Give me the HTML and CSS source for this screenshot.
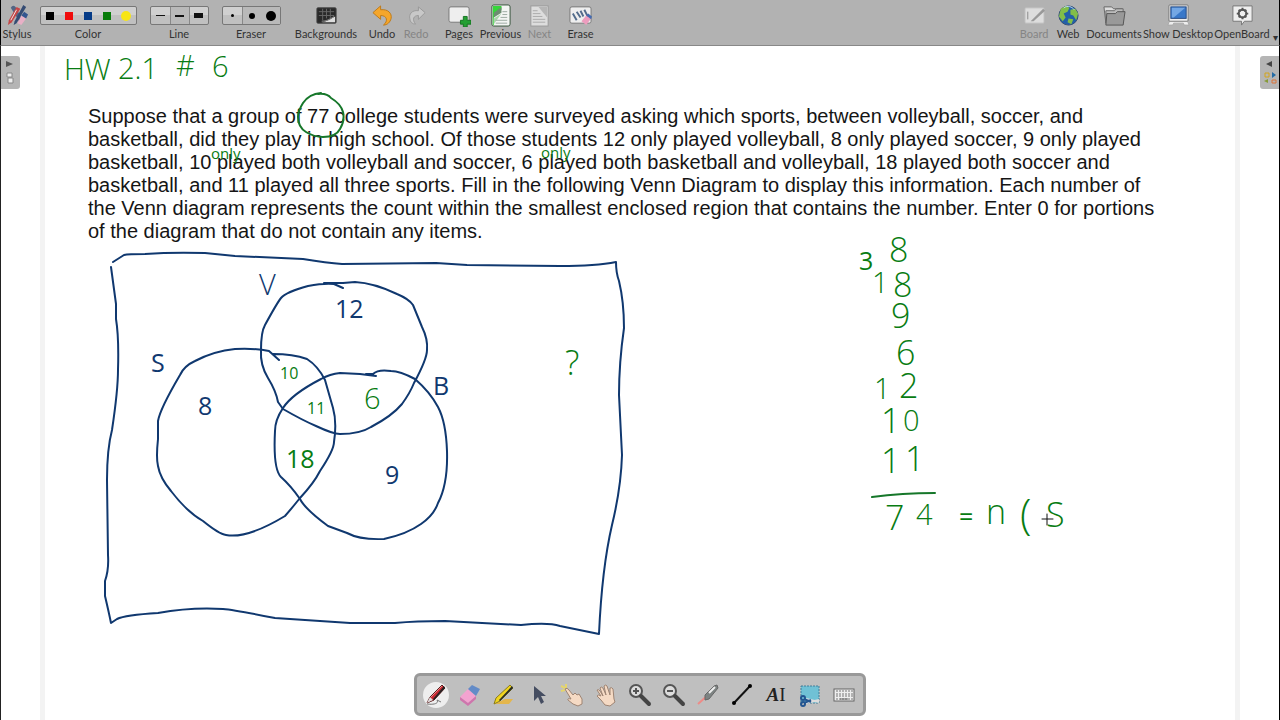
FILE: index.html
```html
<!DOCTYPE html>
<html lang="en">
<head>
<meta charset="utf-8">
<title>OpenBoard</title>
<link rel="stylesheet" href="styles.css">
</head>
<body>
<header class="toolbar">
  <div class="tools">
    <button class="tool w-stylus"><svg class="icon" viewBox="0 0 24 24"><path d="M5 4q2-4 5-1l8 15-3 2z" fill="#526584"/><path d="M11 3L3 17l-1 5 4-3L15 5z" fill="#c64545"/><path d="M11 6L5 17" stroke="#eee"/><path d="M18 1l3 2-10 17-3 2 1-4z" fill="#344b73"/><path d="M12 20l4-8 5 3-5 7z" fill="#e8b0c6"/><path d="M16 12l3-4 4 3-2 4z" fill="#34568f"/></svg><span>Stylus</span></button>
    <div class="tool w-color"><div class="choices" role="group" aria-labelledby="color-label"><button class="choice color-choice" aria-label="Black"><i class="swatch black"></i></button><button class="choice color-choice" aria-label="Red"><i class="swatch red"></i></button><button class="choice color-choice" aria-label="Blue"><i class="swatch blue"></i></button><button class="choice color-choice" aria-label="Green"><i class="swatch green"></i></button><button class="choice color-choice" aria-label="Yellow"><i class="swatch yellow"></i></button></div><span id="color-label">Color</span></div>
    <div class="tool w-line"><div class="choices split" role="group" aria-labelledby="line-label"><button class="choice" aria-label="Fine line"><i class="line fine"></i></button><button class="choice selected" aria-label="Medium line"><i class="line medium"></i></button><button class="choice" aria-label="Strong line"><i class="line strong"></i></button></div><span id="line-label">Line</span></div>
    <div class="tool w-eraser"><div class="choices split" role="group" aria-labelledby="eraser-label"><button class="choice" aria-label="Small eraser"><i class="dot small"></i></button><button class="choice selected" aria-label="Medium eraser"><i class="dot mid"></i></button><button class="choice selected no-rule" aria-label="Large eraser"><i class="dot large"></i></button></div><span id="eraser-label">Eraser</span></div>
    <button class="tool w-backgrounds"><svg class="icon" viewBox="0 0 24 24"><rect x="2" y="4" width="20" height="16" rx="1" fill="#292929" stroke="#444"/><path d="M4 8h16M4 12h16M8 5v12M12 5v10M16 5v10" stroke="#666"/><path d="M4 19c7 0 10-2 17-6v6z" fill="#ddd"/><path d="M7 18c5 0 8-2 13-5" stroke="#888" fill="none"/></svg><span>Backgrounds</span></button>
    <button class="tool w-undo"><svg class="icon" viewBox="0 0 24 24"><path d="M2 9l8-7v4c8-1 12 4 11 9-1 4-4 7-8 7 5-4 4-10-3-10v4z" fill="#f5a62b" stroke="#bd7918"/></svg><span>Undo</span></button>
    <button class="tool w-redo" disabled><svg class="icon" viewBox="0 0 24 24"><path d="M21 9l-7-6v4C7 6 4 11 5 15c0 4 3 6 6 6-4-5-2-9 3-9v4z" fill="#c8c8c8" stroke="#999"/></svg><span>Redo</span></button>
    <button class="tool w-pages group-start"><svg class="icon" viewBox="0 0 24 24"><rect x="1" y="3" width="21" height="16" rx="2" fill="#eee" stroke="#777"/><path d="M16 13h4v4h4v4h-4v3h-4v-3h-3v-4h3z" fill="#24a033" stroke="#167322"/></svg><span>Pages</span></button>
    <button class="tool w-step"><svg class="icon" viewBox="0 0 24 24"><rect x="3" y="1" width="19" height="22" rx="2" fill="#f3f5f3" stroke="#35533a"/><path d="M4 2h9v4L5 14v8H4z" fill="#37d63a"/><path d="M5 14V9l8-6v6z" fill="#6c8d70"/><path d="M5 21l8-11-8 5z" fill="#aad4aa"/><path d="M14 8h5M14 11h5M12 14h7M7 17h12M7 20h12" stroke="#9ba9a0"/></svg><span>Previous</span></button>
    <button class="tool w-step" disabled><svg class="icon" viewBox="0 0 24 24"><rect x="3" y="2" width="18" height="21" fill="#ddd" stroke="#999"/><path d="M11 3h9v11z" fill="#b6b6b6"/><path d="M5 7h5M5 10h8M5 13h10M5 16h13M5 19h13" stroke="#aaa"/></svg><span>Next</span></button>
    <button class="tool w-erase"><svg class="icon" viewBox="0 0 24 24"><rect x="1" y="3" width="22" height="17" rx="2" fill="#eee" stroke="#777"/><path d="M4 10l4 7M8 8l4 6M12 7l3 6M16 6l4 8" stroke="#526b8b" stroke-width="2"/><path d="M13 18l5-6 5 3-5 7z" fill="#ec9dbe"/><path d="M18 12l2-2 4 3-1 3z" fill="#456bae"/></svg><span>Erase</span></button>
  </div>
  <nav class="tools">
    <button class="tool w-web" disabled><svg class="icon" viewBox="0 0 24 24"><rect x="2" y="4" width="20" height="16" rx="1" fill="#ddd" stroke="#bbb"/><path d="M5 8v8" stroke="#888"/><path d="M8 18L21 5l2 2-12 11z" fill="#999"/></svg><span>Board</span></button>
    <button class="tool w-web"><svg class="icon" viewBox="0 0 24 24"><circle cx="12" cy="12" r="10" fill="#225fa8" stroke="#344e74"/><path d="M4 5l5-3 4 2-2 4-4 2 2 4-3 4-4-5zM14 6l5-1 3 5-2 7-3-5-3-1zM12 15l5 1-2 5-4-2z" fill="#82be48"/><path d="M7 4c4-3 9-1 11 2" stroke="#bfdef5" fill="none"/></svg><span>Web</span></button>
    <button class="tool w-documents"><svg class="icon" viewBox="0 0 24 24"><path d="M1 3h8l2 2h9v15H3z" fill="#ddd" stroke="#666"/><path d="M3 7h9l2-2h7v15H3z" fill="#bbb" stroke="#666"/><path d="M4 10h9l2-2h8l-2 14H3z" fill="#999" stroke="#555"/></svg><span>Documents</span></button>
    <button class="tool w-desktop"><svg class="icon" viewBox="0 0 24 24"><path d="M1 22l3-8h16l3 8h-5l-1-2H7l-1 2z" fill="#eee" stroke="#aaa"/><rect x="2" y="1" width="20" height="17" rx="1" fill="#eee" stroke="#777"/><rect x="4" y="3" width="16" height="12" fill="#3978c9" stroke="#294b80"/><path d="M5 4h14L7 14H5z" fill="#74a7e4"/></svg><span>Show Desktop</span></button>
    <button class="tool w-documents"><svg class="icon" viewBox="0 0 24 24"><path d="M2 2h20v16h-8l-3 4v-4H2z" fill="#eee" stroke="#777"/><circle cx="12" cy="10" r="4" fill="none" stroke="#555" stroke-width="2"/><path d="M12 4v3M12 13v3M6 10h3M15 10h3M8 6l2 2M14 12l2 2M16 6l-2 2M10 12l-2 2" stroke="#555" stroke-width="2"/></svg><span>OpenBoard</span></button>
    <button class="more" aria-label="More">▾</button>
  </nav>
</header>

<main class="board">
  <aside class="side"><button class="tab" aria-label="Open page panel"><svg viewBox="0 0 19 33"><path d="M5 5l7 3-7 3z" fill="#555"/><path d="M6 17h5v4H6zM7 22h5v5H7z" fill="#eee" stroke="#888"/></svg></button></aside>
  <article class="sheet">
    <p class="problem">Suppose that a group of 77 college students were surveyed asking which sports, between volleyball, soccer, and<br>basketball, did they play in high school. Of those students 12 only played volleyball, 8 only played soccer, 9 only played<br>basketball, 10 played both volleyball and soccer, 6 played both basketball and volleyball, 18 played both soccer and<br>basketball, and 11 played all three sports. Fill in the following Venn Diagram to display this information. Each number of<br>the Venn diagram represents the count within the smallest enclosed region that contains the number. Enter 0 for portions<br>of the diagram that do not contain any items.</p>
  </article>
  <aside class="side side-right"><button class="tab" aria-label="Open library"><svg viewBox="0 0 19 33"><path d="M12 5L6 8l6 3z" fill="#444"/><path d="M5 17h4v4H5z" fill="none" stroke="#d3a51c"/><path d="M12 16l4 3-4 3z" fill="#246ba5"/><path d="M8 23l-4 2 4 2z" fill="#879b38"/><path d="M12 26v-2h4v3h-4z" fill="none" stroke="#db743b"/></svg></button></aside>

  <svg class="ink" viewBox="0 46 1280 674" width="1280" height="674">
    <g class="blue-ink">
      <path d="M113 262L124 255Q128 254 145 254Q172 252 205 253L235 256L303 259Q327 263 342 264L436 263L467 265L560 266Q596 266 616 262Q616 273 619 281Q624 302 624 328Q619 363 619 395L622 455Q621 488 612 525Q602 568 599 634L560 626Q548 622 521 625L445 621Q416 621 395 623H350L275 618Q235 610 223 609Q191 607 158 613Q125 615 117 619L111 623Q109 613 105 596V581Q109 570 108 555L107 480Q107 449 112 430Q118 390 118 370Q119 337 116 319V304L111 267"/>
      <path d="M343 288L334 284Q324 283 308 286Q286 292 281 298Q277 303 265 325Q261 332 261 350Q260 365 268 378Q276 391 278 402L283 409Q302 420 316 426Q333 434 340 434Q360 434 371 427Q392 416 402 404Q410 393 414 383Q427 359 427 350Q428 339 422 327L413 305Q409 299 397 294Q374 283 355 282L343 283H324"/>
      <path d="M279 360L269 351Q255 348 235 349Q214 351 195 361Q184 366 180 375Q160 409 158 421V439Q156 458 158 466Q160 478 171 491Q187 512 203 521Q219 534 226 535Q247 539 285 516Q292 508 300 498Q314 483 320 471Q334 450 334 442Q337 422 333 408L325 380Q318 366 307 359Q293 354 273 354"/>
      <path d="M376 376L360 374L340 373Q330 374 321 379Q292 394 283 408Q275 420 275 431Q273 469 281 477Q291 486 300 499Q305 509 328 526L347 533Q360 540 384 539Q407 534 421 524Q434 515 438 503Q448 484 447 451Q446 422 438 407Q430 392 415 379Q400 371 391 371Q378 369 373 374H366"/>
      <text class="hand l" x="259" y="295">V</text><text class="hand m" x="151" y="372">S</text><text class="hand m" x="433" y="395">B</text>
      <text class="hand m" x="335" y="318">12</text><text class="hand m" x="198" y="415">8</text><text class="hand m" x="385" y="484">9</text>
    </g>
    <g class="green-ink">
      <path d="M321 93Q309 94 303 103Q298 111 298 117Q298 127 306 132Q314 137 323 137Q336 137 340 129Q345 121 343 112Q341 104 331 98Q327 93 318 94M872 497Q902 493 935 493"/>
      <text class="hand l" x="64" y="80">HW</text><text class="hand l" x="118" y="79">2.1</text><text class="hand l" x="176" y="76">#</text><text class="hand l" x="212" y="77">6</text>
      <text class="hand only" x="211" y="159">only</text><text class="hand only" x="541" y="158">only</text>
      <text class="hand s" x="280" y="379">10</text><text class="hand s" x="307" y="414">11</text><text class="hand l" x="364" y="409">6</text><text class="hand m" x="286" y="468">18</text><text class="hand xl" x="565" y="375">?</text>
      <text class="hand xl" x="889" y="262">8</text><text class="hand m" x="859" y="270">3</text>
      <text class="hand l" x="872" y="293">1</text><text class="hand xl" x="893" y="297">8</text>
      <text class="hand xl" x="891" y="328">9</text><text class="hand xl" x="896" y="365">6</text>
      <text class="hand l" x="874" y="399">1</text><text class="hand xl" x="899" y="398">2</text>
      <text class="hand xl" x="881" y="433">1</text><text class="hand l" x="903" y="431">0</text>
      <text class="hand xl" x="881" y="473">1</text><text class="hand xl" x="905" y="471">1</text>
      <text class="hand xl" x="885" y="530">7</text><text class="hand l" x="916" y="525">4</text><text class="hand m" x="959" y="526">=</text><text class="hand xl" x="986" y="524">n</text><text class="hand paren" x="1020" y="529">(</text><text class="hand xl" x="1046" y="527">S</text>
    </g>
    <path class="cursor" d="M1042 519h11M1047 514v11"/>
  </svg>

  <div class="palette" role="toolbar" aria-label="Drawing tools">
    <button class="pick active" aria-label="Pen"><svg viewBox="0 0 26 26"><path d="M4 21l3-6L19 3l3 3L11 18z" fill="#c82832" stroke="#5a2020"/><path d="M21 4l1 2-11 12-1-1z" fill="#242424"/><path d="M8 15L19 4" stroke="#ef8a8a"/><path d="M4 21l3-6 3 3z" fill="#ddd"/><path d="M4 22c8 1 12-1 10-4l4 2" fill="none" stroke="#777"/></svg></button>
    <button class="pick" aria-label="Eraser"><svg viewBox="0 0 26 26"><path d="M3 15l8-8 8 7-8 7z" fill="#f3a3d0"/><path d="M11 7l4-4 8 4-4 7z" fill="#638bc7"/><path d="M3 15l8 6v3l-8-6zM11 21l8-7v3l-8 7z" fill="#cf75ad"/></svg></button>
    <button class="pick" aria-label="Highlighter"><svg viewBox="0 0 26 26"><path d="M4 22h14l4-5h-8z" fill="#e4b64b"/><path d="M3 22l2-6L19 3l3 3L9 19z" fill="#f1d51e" stroke="#8b7c1c"/><path d="M21 4l1 2L9 19l-1-1z" fill="#292d28"/></svg></button>
    <button class="pick" aria-label="Select"><svg viewBox="0 0 26 26"><path d="M9 4v15l4-4 3 7 3-2-3-6h5z" fill="#454d61"/></svg></button>
    <button class="pick" aria-label="Interact"><svg viewBox="0 0 26 26"><path d="M2 4l4 2M7 2v4M2 9l4-1" stroke="#e5d56c" stroke-width="2"/><path d="M6 7q2-2 4 1l4 5 2-2 2 2 2-1 3 5v5l-4 2-5-2-5-4q-1-2 3-1z" fill="#f5dac4" stroke="#9e8473"/></svg></button>
    <button class="pick" aria-label="Pan"><svg viewBox="0 0 26 26"><path d="M4 8q2-1 3 1l3 5-3-8q1-2 3 0l3 7-2-9q2-2 3 0l3 9V6q2-1 3 1l1 10 1 3-5 4-5-1-4-5-4-4q1-2 4 0z" fill="#f5dac4" stroke="#9e8473"/></svg></button>
    <button class="pick" aria-label="Zoom in"><svg viewBox="0 0 26 26"><circle cx="9" cy="9" r="6" fill="#ddd" stroke="#555" stroke-width="2"/><path d="M6 9h6M9 6v6" stroke="#555" stroke-width="2"/><path d="M14 14l8 8" stroke="#444" stroke-width="4" stroke-linecap="round"/></svg></button>
    <button class="pick" aria-label="Zoom out"><svg viewBox="0 0 26 26"><circle cx="9" cy="9" r="6" fill="#ddd" stroke="#555" stroke-width="2"/><path d="M6 9h6" stroke="#555" stroke-width="2"/><path d="M14 14l8 8" stroke="#444" stroke-width="4" stroke-linecap="round"/></svg></button>
    <button class="pick" aria-label="Laser pointer"><svg viewBox="0 0 26 26"><path d="M3 22L14 12" stroke="#ee8b87" stroke-width="2"/><path d="M10 13l9-9 3-1 1 3-9 11-4 1z" fill="#7d8382" stroke="#666"/><path d="M14 11l6-6" stroke="#eee" stroke-width="2"/></svg></button>
    <button class="pick" aria-label="Line"><svg viewBox="0 0 26 26"><path d="M5 21L21 4" stroke="#111" stroke-width="2"/><circle cx="5" cy="21" r="2"/><circle cx="21" cy="4" r="2"/></svg></button>
    <button class="pick text-pick" aria-label="Text"><em>A</em><span>I</span></button>
    <button class="pick" aria-label="Capture"><svg viewBox="0 0 26 26"><rect x="4" y="4" width="18" height="17" fill="#70c1d5" stroke="#427e99" stroke-dasharray="2 1"/><path d="M9 21l13-3M9 17l13 3" stroke="#ddd" stroke-width="2"/><path d="M7 17l7 3M7 21l7-3" stroke="#235590" stroke-width="2"/><circle cx="6" cy="16" r="2" fill="none" stroke="#235590" stroke-width="2"/><circle cx="6" cy="22" r="2" fill="none" stroke="#235590" stroke-width="2"/></svg></button>
    <button class="pick" aria-label="Virtual keyboard"><svg viewBox="0 0 26 26"><rect x="3" y="7" width="20" height="12" fill="#eee" stroke="#666"/><path d="M5 9h17M5 12h17M5 14h17M5 17h17" stroke="#777" stroke-dasharray="2 1"/><path d="M9 17h8" stroke="#666"/></svg></button>
  </div>
</main>
</body>
</html>
```
FILE: styles.css
```css
* { box-sizing: border-box; }
body { margin: 0; min-height: 100vh; display: flex; flex-direction: column; background: #fff; font-family: Lato, "Noto Sans", sans-serif; overflow-x: hidden; }
button { font: inherit; color: inherit; border: 0; padding: 0; background: none; }
.toolbar { display: flex; justify-content: space-between; height: 46px; background: #b2b2b2; border-bottom: 1px solid #888; border-left: 1px solid #000; border-right: 1px solid #000; color: #333; font-size: 11px; line-height: 14px; }
.tools { display: flex; align-items: flex-start; padding-top: 4px; }
.tool { display: flex; flex-direction: column; align-items: center; white-space: nowrap; }
.tool:disabled { color: #858585; }
.icon { width: 23px; height: 23px; }
.w-stylus { width: 32px; }
.w-color { width: 110px; }
.w-line, .w-eraser { width: 72px; }
.w-backgrounds { width: 78px; }
.w-undo, .w-web { width: 34px; }
.w-redo { width: 34px; }
.w-pages { width: 44px; }
.w-step { width: 39px; }
.w-erase { width: 43px; }
.w-documents { width: 58px; }
.w-desktop { width: 70px; }
.group-start { margin-left: 4px; }
.more { width: 8px; padding-top: 26px; font-size: 10px; line-height: 14px; }
.choices { display: flex; height: 19px; margin: 2px 0; border: 1px solid #777; border-radius: 2px; background: linear-gradient(#d0d0d0 50%, #c0c0c0 50%); }
.choice { display: flex; align-items: center; justify-content: center; width: 19px; height: 17px; }
.split .choice + .choice { border-left: 1px solid #888; }
.split .choice.no-rule { border-left-color: transparent; }
.selected { background: #b9b9b9; }
.swatch { width: 8px; height: 8px; }
.black { background: #000; }
.red { background: #f00c0c; }
.blue { background: #063b87; }
.green { background: #087c0a; }
.yellow { width: 10px; height: 10px; border-radius: 50%; background: #f7e516; }
.line { width: 9px; background: #111; }
.fine { height: 1px; }
.medium { height: 2px; }
.strong { height: 5px; }
.dot { border-radius: 50%; background: #000; }
.small { width: 3px; height: 3px; }
.mid { width: 6px; height: 6px; }
.large { width: 10px; height: 10px; }
.board { position: relative; flex: 1; display: flex; border-left: 1px solid #222; border-right: 1px solid #000; }
.side { width: 44px; flex-shrink: 0; padding-top: 10px; border-right: 5px solid #f3f3f3; }
.side-right { display: flex; justify-content: flex-end; align-items: flex-start; border-right: 0; border-left: 5px solid #f3f3f3; }
.tab { display: block; width: 19px; height: 33px; background: #b5b5b5; border-radius: 0 3px 3px 0; }
.side-right .tab { border-radius: 3px 0 0 3px; }
.tab svg { display: block; width: 19px; height: 33px; }
.sheet { flex: 1; min-width: 0; padding: 59px 43px 130px; }
.problem { margin: 0; color: #151515; font-family: "Liberation Sans", Arial, sans-serif; font-size: 20px; line-height: 23px; white-space: nowrap; }
.ink { position: absolute; top: 0; left: -1px; pointer-events: none; }
.ink path { fill: none; stroke-width: 2; stroke-linecap: round; stroke-linejoin: round; }
.blue-ink path { stroke: #10386f; }
.green-ink path { stroke: #16772a; }
.blue-ink { fill: #10386f; }
.green-ink { fill: #087c12; }
.hand { font-family: "Open Sans", sans-serif; font-weight: 400; }
.only { font-size: 15px; }
.s { font-size: 16px; }
.m { font-size: 25px; }
.l { font-size: 29px; font-weight: 300; }
.xl { font-size: 34px; font-weight: 300; }
.paren { font-size: 42px; font-weight: 300; }
.ink .cursor { stroke: #111; stroke-width: 1; }
.palette { position: absolute; bottom: 4px; left: 50%; transform: translateX(-50%); display: flex; align-items: center; height: 43px; padding: 0 2px; border: 3px solid #999; border-radius: 6px; background: #bfbfbf; }
.pick { display: flex; align-items: center; justify-content: center; width: 34px; height: 32px; }
.pick svg { width: 26px; height: 26px; }
.active svg { border-radius: 50%; background: #eee; }
.text-pick { color: #222; font-family: "Liberation Serif", serif; font-size: 19px; line-height: 24px; }
.text-pick em { font-weight: bold; }
```
